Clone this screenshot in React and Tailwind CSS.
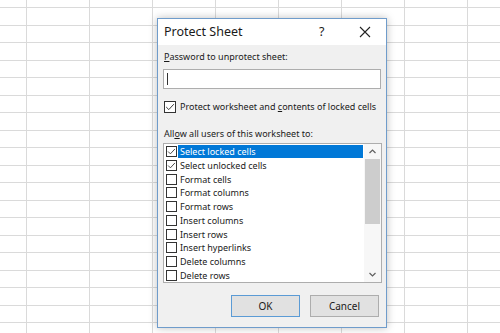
import React from "react";

const font = { fontFamily: '"Noto Sans", "Open Sans", sans-serif' };

function Check({ checked, size = 12 }) {
  return (
    <span
      className="inline-flex items-center justify-center border border-[#333] bg-white shrink-0"
      style={{ width: size, height: size }}
    >
      {checked && (
        <svg width={size - 2} height={size - 2} viewBox="0 0 10 10">
          <path d="M1.2 5 L3.8 7.6 L8.8 2.2" fill="none" stroke="#3a3a3a" strokeWidth="1" />
        </svg>
      )}
    </span>
  );
}

const items = [
  ["Select locked cells", true, true],
  ["Select unlocked cells", true, false],
  ["Format cells", false, false],
  ["Format columns", false, false],
  ["Format rows", false, false],
  ["Insert columns", false, false],
  ["Insert rows", false, false],
  ["Insert hyperlinks", false, false],
  ["Delete columns", false, false],
  ["Delete rows", false, false],
];

export default function App() {
  const rows = Array.from({ length: 20 });
  const cols = [27, 63, 63, 63, 63, 63, 63, 63, 63];
  return (
    <div className="relative w-[500px] h-[333px] overflow-hidden bg-white" style={font}>
      {/* spreadsheet grid */}
      <div className="flex h-full">
        {cols.map((w, i) => (
          <div key={i} className="h-full border-r border-[#dadada] shrink-0" style={{ width: w }} />
        ))}
      </div>
      <div className="absolute inset-0 flex flex-col pt-[7px]">
        {rows.map((_, i) => (
          <div key={i} className="h-[17.5px] shrink-0 border-t border-[#dadada]" />
        ))}
      </div>

      {/* dialog */}
      <div className="absolute left-[157px] top-[18px] w-[230px] h-[310px] border border-[#6f9ccb] bg-[#f0f0f0] shadow-[0_0_8px_rgba(0,0,0,0.25)] flex flex-col text-[#1a1a1a]">
        <div className="h-[26px] bg-white flex items-center pl-[6px] shrink-0">
          <span className="text-[12.5px] leading-none">Protect Sheet</span>
          <span className="ml-auto text-[12.5px] leading-none w-[7px] mr-[33px]">?</span>
          <svg width="12" height="12" viewBox="0 0 12 12" className="mr-[15px]">
            <path d="M1 1 L11 11 M11 1 L1 11" stroke="#222" strokeWidth="1.1" />
          </svg>
        </div>
        <div className="flex flex-col px-[5px] text-[9px]">
          <div className="mt-[5px] h-[14px] leading-[14px] pl-[1px]">
            <span className="underline">P</span>assword to unprotect sheet:
          </div>
          <div className="mt-[5px] h-[20px] w-[218px] bg-white border border-[#adadad] flex items-center pl-[3px]">
            <div className="w-px h-[12px] bg-[#333]" />
          </div>
          <div className="mt-[11px] h-[14px] flex items-center gap-[4px] pl-[1px]">
            <Check checked />
            <span className="leading-[14px]">
              Protect worksheet and <span className="underline">c</span>ontents of locked cells
            </span>
          </div>
          <div className="mt-[13px] h-[14px] leading-[14px] pl-[1px]">
            All<span className="underline">o</span>w all users of this worksheet to:
          </div>
          <div className="mt-[2px] h-[140px] w-[219px] bg-white border border-[#adadad] flex">
            <div className="flex-1 flex flex-col pt-[1px] pl-[2px]">
              {items.map(([label, checked, sel]) => (
                <div key={label} className="h-[14px] flex items-center">
                  <Check checked={checked} size={11} />
                  <span
                    className={`ml-[1px] h-[13px] leading-[13px] pl-[2px] flex-1 ${sel ? "bg-[#0078d7] text-white" : ""}`}
                  >
                    {label}
                  </span>
                </div>
              ))}
            </div>
            <div className="w-[17px] ml-[1px] flex flex-col items-center bg-[#f7f7f7]">
              <div className="h-[15px] flex items-center justify-center">
                <svg width="7" height="5" viewBox="0 0 7 5">
                  <path d="M0.5 4 L3.5 1 L6.5 4" fill="none" stroke="#606060" strokeWidth="1.2" />
                </svg>
              </div>
              <div className="w-[15px] h-[65px] bg-[#cdcdcd]" />
              <div className="flex-1" />
              <div className="h-[15px] flex items-center justify-center">
                <svg width="7" height="5" viewBox="0 0 7 5">
                  <path d="M0.5 1 L3.5 4 L6.5 1" fill="none" stroke="#606060" strokeWidth="1.2" />
                </svg>
              </div>
            </div>
          </div>
          <div className="mt-[12px] flex justify-end gap-[10px] pr-[2px] text-[10px]">
            <div className="w-[69px] h-[22px] bg-[#e1e1e1] border border-[#5b9bd5] flex items-center justify-center">
              OK
            </div>
            <div className="w-[69px] h-[22px] bg-[#e1e1e1] border border-[#adadad] flex items-center justify-center">
              Cancel
            </div>
          </div>
        </div>
      </div>
    </div>
  );
}
